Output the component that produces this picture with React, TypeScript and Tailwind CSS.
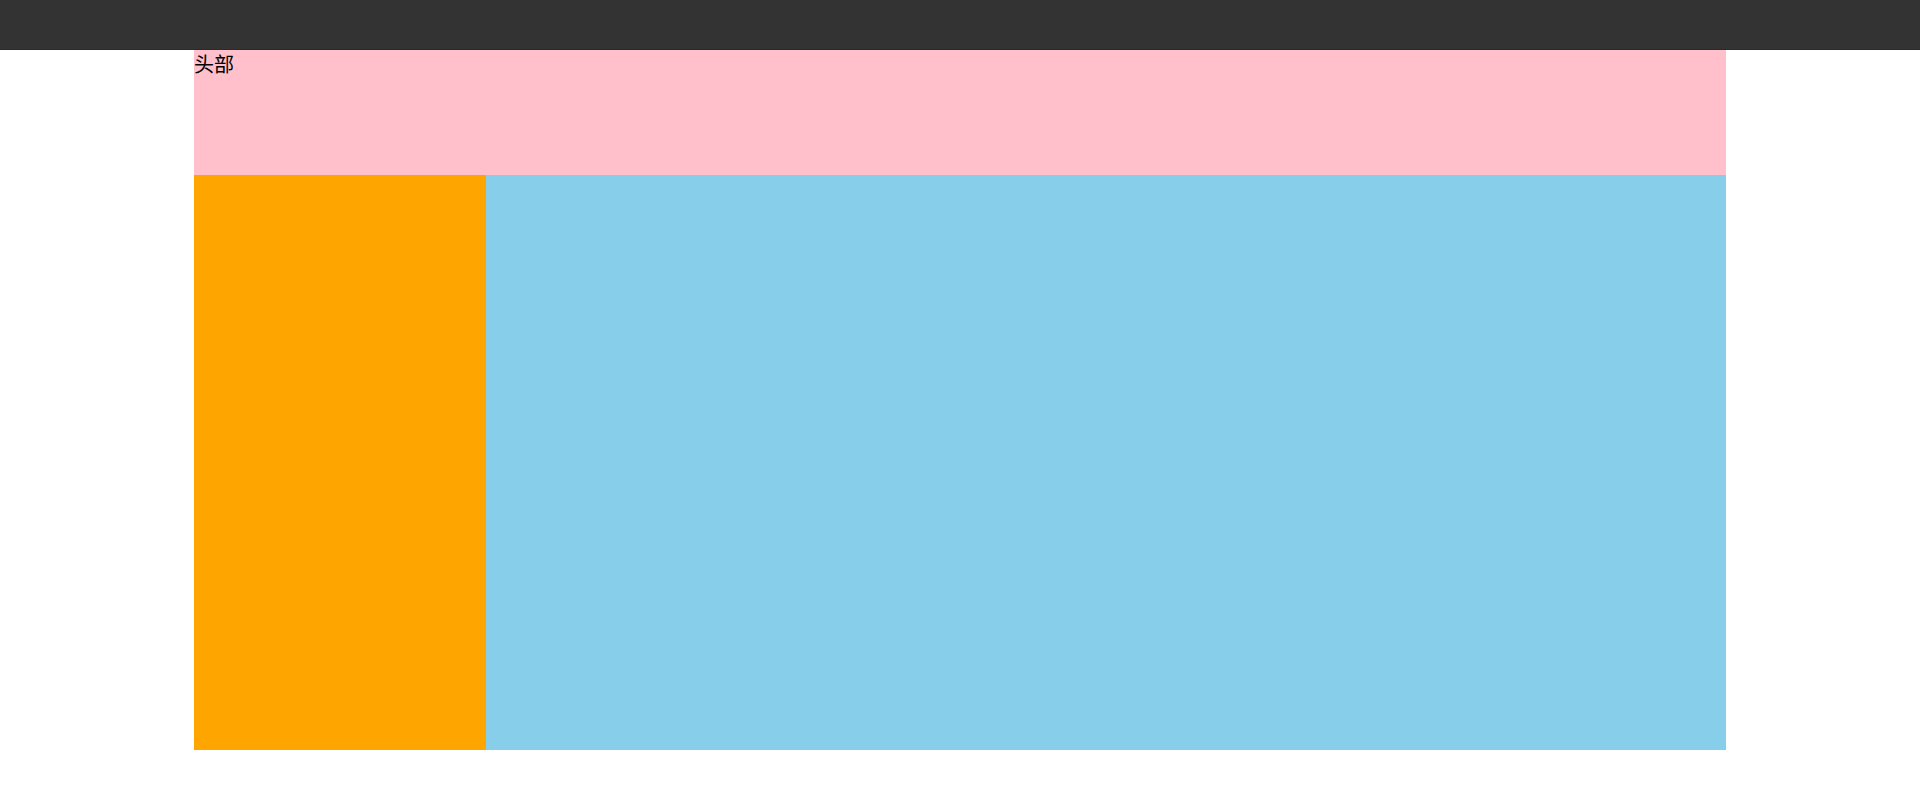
export default function App() {
  return (
    <div className="min-h-screen bg-white" style={{ fontFamily: '"Noto Sans CJK SC", "Noto Sans", sans-serif' }}>
      {/* Top bar */}
      <div className="h-[50px] bg-[#333333] border-b border-[#2a2a2a]"></div>

      {/* Page */}
      <div className="w-[1532px] mx-auto">
        <div className="h-[125px] bg-[#ffc0cb] text-[20px] leading-[28px] text-black">头部</div>
        <div className="flex h-[575px]">
          <div className="w-[292px] bg-[#ffa500]"></div>
          <div className="flex-1 bg-[#87ceeb]"></div>
        </div>
      </div>
    </div>
  );
}
